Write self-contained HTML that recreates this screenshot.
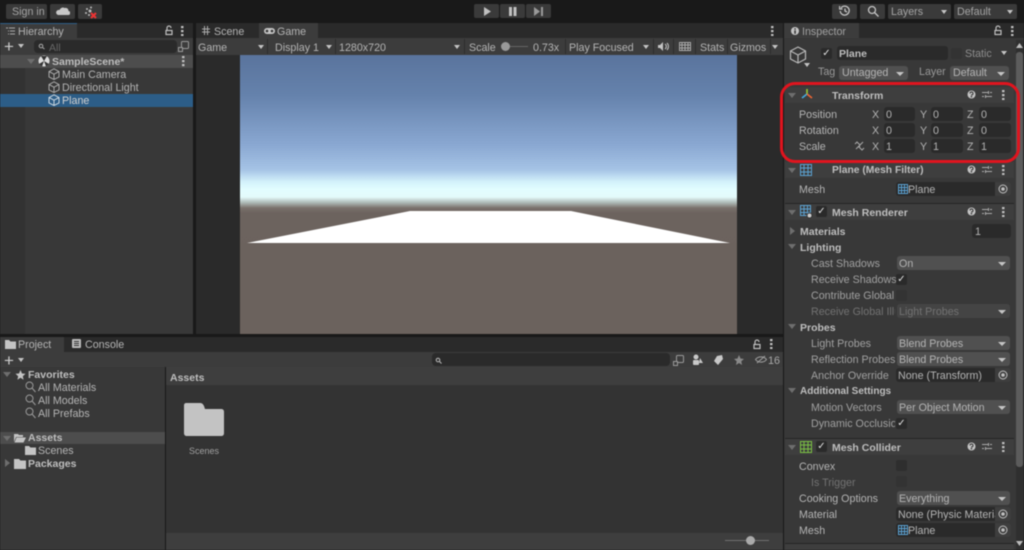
<!DOCTYPE html>
<html><head><meta charset="utf-8"><style>
html,body{margin:0;padding:0;background:#191919;width:1024px;height:550px;overflow:hidden}
#r{position:relative;width:1024px;height:550px;overflow:hidden;font:10.7px/12px "Liberation Sans",sans-serif;color:#b4b4b4;filter:blur(.45px)}
#r div,#r span,#r svg{position:absolute}
#r span{white-space:nowrap;transform:translateY(1px)}
#r span.b{font-weight:bold;font-size:10.5px;color:#bebebe}
.d{color:#727272}
.btn{background:#3a3a3a;border-radius:2px}
.dd{background:#505050;border-radius:3px;height:14px}
.f{background:#2a2a2a;border-radius:3px;height:14px}
.dd::after{content:"";position:absolute;right:4px;top:6px;border:4px solid transparent;border-top-color:#c4c4c4;border-bottom:0}
.a{width:0;height:0;border:4px solid transparent;border-top:5px solid #6e6e6e;border-bottom:0}
.ar{width:0;height:0;border:4px solid transparent;border-left:5px solid #6e6e6e;border-right:0}
.w{width:0;height:0;border:3.5px solid transparent;border-top:4px solid #c4c4c4;border-bottom:0}
.c{width:11px;height:11px;background:#2a2a2a;border-radius:2px;color:#e0e0e0;font-size:10px;line-height:11px;text-align:center}
.h{left:785px;width:229px;background:#3e3e3e;height:16px}
.sep{width:1px;background:#2c2c2c;top:39px;height:15px}
</style></head><body><div id="r">

<!-- top bar -->
<div class="btn" style="left:6px;top:4px;width:41px;height:15px"></div><span style="left:12px;top:5px;color:#a4a4a4">Sign in</span>
<div class="btn" style="left:50px;top:4px;width:25px;height:15px"></div>
<svg style="left:56px;top:6px" width="14" height="10"><path d="M2 9h10a2 2 0 0 0 .5-4 3 3 0 0 0-4-3 3.500 3.500 0 0 0-5 2 2.500 2.500 0 0 0-1.500 5z" fill="#c8c8c8"/></svg>
<div class="btn" style="left:78px;top:4px;width:24px;height:15px"></div>
<svg style="left:84px;top:6px" width="14" height="13"><g fill="#bbb"><circle cx="3" cy="3" r="1"/><circle cx="7" cy="1.500" r="1"/><circle cx="2" cy="7" r="1"/><circle cx="6" cy="5" r="1.500"/><circle cx="5" cy="9" r="1"/></g><path d="M7 7l5 5M12 7l-5 5" stroke="#e33" stroke-width="2"/></svg>
<div class="btn" style="left:474px;top:4px;width:25px;height:14px"></div><svg style="left:483px;top:7px" width="8" height="9"><path d="M1 0l7 4.500-7 4.500z" fill="#c0c0c0"/></svg>
<div class="btn" style="left:500px;top:4px;width:25px;height:14px"></div><svg style="left:508px;top:7px" width="9" height="9"><path d="M1 0h3v9H1zM5.500 0h3v9h-3z" fill="#c0c0c0"/></svg>
<div class="btn" style="left:526px;top:4px;width:25px;height:14px"></div><svg style="left:534px;top:7px" width="9" height="9"><path d="M0 0l6 4.500-6 4.500zM7 0h2v9H7z" fill="#999"/></svg>
<div class="btn" style="left:832px;top:4px;width:25px;height:15px"></div>
<svg style="left:839px;top:5px" width="12" height="12" fill="none" stroke="#c4c4c4" stroke-width="1.300"><path d="M2 3a4.500 4.500 0 1 1-.8 3M6 3.500V6l2 1"/><path d="M.5 1v3h3"/></svg>
<div class="btn" style="left:860px;top:4px;width:25px;height:15px"></div>
<svg style="left:867px;top:5px" width="12" height="12" fill="none" stroke="#c4c4c4" stroke-width="1.300"><circle cx="5" cy="5" r="3.500"/><path d="M7.500 7.500l4 4"/></svg>
<div class="btn" style="left:888px;top:4px;width:63px;height:15px"></div><span style="left:891px;top:5px;color:#a4a4a4">Layers</span><div class="w" style="left:941px;top:10px"></div>
<div class="btn" style="left:954px;top:4px;width:63px;height:15px"></div><span style="left:957px;top:5px;color:#a4a4a4">Default</span><div class="w" style="left:1007px;top:10px"></div>

<!-- hierarchy -->
<div style="left:0;top:23px;width:193px;height:311px;background:#2a2a2a"></div>
<div style="left:0;top:23px;width:77px;height:15px;background:#3c3c3c;border-top:1px solid #2c5d87;box-sizing:border-box"></div>
<svg style="left:6px;top:27px" width="9" height="8" stroke="#aaa"><path d="M0 1h2M3 1h6M2 4h1M4 4h5M2 7h1M4 7h5"/></svg>
<span style="left:18px;top:25px">Hierarchy</span>
<svg style="left:165px;top:25px" width="8" height="11" fill="none" stroke="#c0c0c0" stroke-width="1.200"><path d="M2 5V3a2 2 0 0 1 4 0"/><rect x="1" y="5.500" width="6" height="4"/></svg>
<svg style="left:181px;top:26px" width="3" height="10" fill="#c0c0c0"><rect width="2.500" height="2.200" y="0"/><rect width="2.500" height="2.200" y="4"/><rect width="2.500" height="2.200" y="8"/></svg>
<div style="left:0;top:38px;width:193px;height:17px;background:#3c3c3c"></div>
<span style="left:4px;top:40px;font-size:17px;line-height:12px;color:#ccc">+</span><div class="w" style="left:18px;top:44px"></div>
<div style="left:34px;top:40px;width:143px;height:13px;background:#2a2a2a;border-radius:4px"></div>
<svg style="left:38px;top:43px" width="8" height="7" fill="none" stroke="#aaa"><circle cx="3" cy="3" r="1.800"/><path d="M4.500 4.500l2 1.500"/></svg>
<span style="left:49px;top:41px;color:#666;font-size:10.500px">All</span>
<svg style="left:178px;top:41px" width="11" height="11" fill="none" stroke="#999"><rect x="3.500" y=".5" width="7" height="7" rx="1"/><rect x=".5" y="6.500" width="4" height="4" fill="#3c3c3c"/></svg>
<div style="left:0;top:55px;width:193px;height:279px;background:#383838"></div>
<div style="left:0;top:55px;width:25px;height:279px;background:#323232"></div>
<div style="left:0;top:55px;width:193px;height:13px;background:#4d4d4d"></div>
<div style="left:0;top:94px;width:193px;height:13px;background:#2c5d87"></div>
<div class="a" style="left:27px;top:59px"></div>
<svg style="left:38px;top:55px" width="12" height="12"><circle cx="6" cy="6" r="5.500" fill="#ddd"/><path d="M6 6L3 1h6zM6 6L1 9l3 2.500zM6 6l5 3-3 2.500z" fill="#333"/></svg>
<span class="b" style="left:52px;top:55px">SampleScene*</span>
<svg style="left:182px;top:56px" width="3" height="11" fill="#c0c0c0"><rect width="2.500" height="2.200" y="0"/><rect width="2.500" height="2.200" y="4"/><rect width="2.500" height="2.200" y="8"/></svg>
<svg style="left:48px;top:68px" width="12" height="12" fill="none" stroke="#a8a8a8"><path d="M6 .8l5 2.700v5.500L6 11.500 1 9V3.500zM1 3.500L6 6.200l5-2.700M6 6.200v5.300"/></svg>
<span style="left:62px;top:68px">Main Camera</span>
<svg style="left:48px;top:81px" width="12" height="12" fill="none" stroke="#a8a8a8"><path d="M6 .8l5 2.700v5.500L6 11.500 1 9V3.500zM1 3.500L6 6.200l5-2.700M6 6.200v5.300"/></svg>
<span style="left:62px;top:81px">Directional Light</span>
<svg style="left:48px;top:94px" width="12" height="12" fill="none" stroke="#c8d4de"><path d="M6 .8l5 2.700v5.500L6 11.500 1 9V3.500zM1 3.500L6 6.200l5-2.700M6 6.200v5.300"/></svg>
<span style="left:62px;top:94px;color:#d0d0d0">Plane</span>

<!-- game -->
<div style="left:196px;top:23px;width:587px;height:15px;background:#2a2a2a"></div>
<div style="left:259px;top:23px;width:59px;height:15px;background:#3c3c3c"></div>
<svg style="left:202px;top:26px" width="8" height="9" stroke="#aaa"><path d="M2.500 0v9M5.500 0v9M0 3h8M0 6h8"/></svg>
<span style="left:214px;top:25px">Scene</span>
<svg style="left:264px;top:28px" width="11" height="6"><rect width="11" height="6" rx="3" fill="#c4c4c4"/><circle cx="3" cy="3" r="1.300" fill="#333"/><circle cx="8" cy="3" r="1.300" fill="#333"/></svg>
<span style="left:277px;top:25px">Game</span>
<svg style="left:771px;top:26px" width="3" height="10" fill="#c0c0c0"><rect width="2.500" height="2.200" y="0"/><rect width="2.500" height="2.200" y="4"/><rect width="2.500" height="2.200" y="8"/></svg>
<div style="left:196px;top:38px;width:587px;height:17px;background:#3c3c3c"></div>
<span style="left:198px;top:41px">Game</span><div class="w" style="left:258px;top:45px"></div><div class="sep" style="left:267px"></div>
<span style="left:275px;top:41px">Display 1</span><div class="w" style="left:326px;top:45px"></div><div class="sep" style="left:335px"></div>
<span style="left:339px;top:41px">1280x720</span><div class="w" style="left:454px;top:45px"></div><div class="sep" style="left:464px"></div>
<span style="left:469px;top:41px">Scale</span><div style="left:502px;top:46px;width:26px;height:1px;background:#666"></div><div style="left:501px;top:42px;width:9px;height:9px;border-radius:50%;background:#999"></div>
<span style="left:533px;top:41px">0.73x</span><div class="sep" style="left:565px"></div>
<span style="left:569px;top:41px">Play Focused</span><div class="w" style="left:643px;top:45px"></div><div class="sep" style="left:653px"></div>
<svg style="left:658px;top:42px" width="11" height="9"><path d="M0 3h2l3-3v9L2 6H0z" fill="#c4c4c4"/><path d="M7 2a3 3 0 0 1 0 5M9 1a5 5 0 0 1 0 7" fill="none" stroke="#c4c4c4"/></svg>
<div class="sep" style="left:673px"></div>
<svg style="left:679px;top:42px" width="12" height="9" fill="none" stroke="#aaa"><rect x=".5" y=".5" width="11" height="8"/><path d="M0 3h12M0 6h12M3 0v9M6 0v9M9 0v9"/></svg>
<div class="sep" style="left:695px"></div>
<span style="left:700px;top:41px">Stats</span><div class="sep" style="left:727px"></div>
<span style="left:730px;top:41px">Gizmos</span><div class="sep" style="left:770px"></div><div class="w" style="left:772px;top:45px"></div>
<div style="left:196px;top:55px;width:587px;height:279px;background:#2a2a2a"></div>
<div style="left:240px;top:55px;width:497px;height:279px;background:linear-gradient(180deg,#5a749d 0,#6582ac 40px,#8aa8d2 90px,#a6c4e6 115px,#d4f2fb 127px,#e2fdff 134px,#e4fbfb 142px,#aab4b1 148px,#7a716c 153px,#6c635e 158px,#6b625d 279px)"></div>
<svg style="left:240px;top:205px" width="497" height="42"><path d="M7 38L170 6H331L490 38z" fill="#fff"/></svg>

<!-- project -->
<div style="left:0;top:337px;width:783px;height:15px;background:#2a2a2a"></div>
<div style="left:0;top:337px;width:64px;height:15px;background:#3c3c3c"></div>
<svg style="left:5px;top:340px" width="11" height="9"><path d="M0 0h4l1.500 1.500H11V9H0z" fill="#c4c4c4"/></svg>
<span style="left:18px;top:338px">Project</span>
<svg style="left:72px;top:339px" width="9" height="10"><rect width="9" height="9" rx="1" fill="#bbb"/><path d="M2 2.500h5M2 4.500h5M2 6.500h5" stroke="#333"/></svg>
<span style="left:85px;top:338px">Console</span>
<svg style="left:753px;top:339px" width="8" height="11" fill="none" stroke="#c0c0c0" stroke-width="1.200"><path d="M2 5V3a2 2 0 0 1 4 0"/><rect x="1" y="5.500" width="6" height="4"/></svg>
<svg style="left:770px;top:339px" width="3" height="10" fill="#c0c0c0"><rect width="2.500" height="2.200" y="0"/><rect width="2.500" height="2.200" y="4"/><rect width="2.500" height="2.200" y="8"/></svg>
<div style="left:0;top:352px;width:783px;height:15px;background:#3c3c3c"></div>
<span style="left:4px;top:354px;font-size:17px;line-height:12px;color:#ccc">+</span><div class="w" style="left:18px;top:358px"></div>
<div style="left:432px;top:353px;width:238px;height:13px;background:#2a2a2a;border-radius:4px"></div>
<svg style="left:435px;top:357px" width="7" height="7" fill="none" stroke="#bbb"><circle cx="3" cy="3" r="1.800"/><path d="M4.500 4.500l2 2"/></svg>
<svg style="left:673px;top:355px" width="11" height="11" fill="none" stroke="#999"><rect x="3.500" y=".5" width="7" height="7" rx="1"/><rect x=".5" y="6.500" width="4" height="4" fill="#3c3c3c"/></svg>
<svg style="left:692px;top:354px" width="12" height="12" fill="#c8c8c8"><circle cx="4" cy="3" r="2.500"/><rect x="1" y="6" width="6" height="5" rx="1"/><path d="M8 4l3 5H7z"/></svg>
<svg style="left:712px;top:355px" width="11" height="10"><path d="M5 1l5-1 1 4-5 6-4-4z" fill="#c8c8c8"/></svg>
<svg style="left:734px;top:355px" width="10" height="10"><path d="M5 0l1.500 3.500L10 4 7.300 6.300 8 10 5 8 2 10l.7-3.700L0 4l3.500-.5z" fill="#8a8a8a"/></svg>
<svg style="left:755px;top:355px" width="12" height="9" fill="none" stroke="#a0a0a0"><path d="M.5 4.500C3 1 9 1 11.500 4.500 9 8 3 8 .5 4.500zM2 8l8-7"/></svg>
<span style="left:768px;top:354px;color:#aaa">16</span>
<div style="left:0;top:367px;width:165px;height:183px;background:#383838"></div>
<div style="left:166px;top:367px;width:617px;height:183px;background:#333"></div>
<div style="left:166px;top:367px;width:617px;height:18px;background:#3e3e3e"></div>
<span class="b" style="left:170px;top:371px">Assets</span>
<div class="a" style="left:3px;top:372px"></div>
<svg style="left:15px;top:370px" width="11" height="10"><path d="M5.500 0l1.500 3.500 3.500.3-2.700 2.400.8 3.600-3.100-2-3.100 2 .8-3.600L.5 3.800 4 3.500z" fill="#c4c4c4"/></svg>
<span class="b" style="left:28px;top:368px">Favorites</span>
<svg style="left:25px;top:381px" width="11" height="12" fill="none" stroke="#999"><circle cx="4.500" cy="4.500" r="3.500"/><path d="M7 7l3.500 4"/></svg>
<span style="left:38px;top:381px">All Materials</span>
<svg style="left:25px;top:394px" width="11" height="12" fill="none" stroke="#999"><circle cx="4.500" cy="4.500" r="3.500"/><path d="M7 7l3.500 4"/></svg>
<span style="left:38px;top:394px">All Models</span>
<svg style="left:25px;top:407px" width="11" height="12" fill="none" stroke="#999"><circle cx="4.500" cy="4.500" r="3.500"/><path d="M7 7l3.500 4"/></svg>
<span style="left:38px;top:407px">All Prefabs</span>
<div style="left:0;top:432px;width:165px;height:12px;background:#4d4d4d"></div>
<div class="a" style="left:3px;top:436px"></div>
<svg style="left:14px;top:433px" width="12" height="10"><path d="M0 1h4l1 1h4v2H2L0 9z" fill="#c4c4c4"/><path d="M2.500 4.500H12L9.500 9.500H.5z" fill="#c4c4c4"/></svg>
<span class="b" style="left:28px;top:431px">Assets</span>
<svg style="left:25px;top:446px" width="11" height="9"><path d="M0 0h4l1.500 1.500H11V9H0z" fill="#c4c4c4"/></svg>
<span style="left:38px;top:444px">Scenes</span>
<div class="ar" style="left:5px;top:459px"></div>
<svg style="left:14px;top:459px" width="12" height="10"><path d="M0 0h5l1.500 1.500H12V10H0z" fill="#c4c4c4"/></svg>
<span class="b" style="left:28px;top:457px">Packages</span>
<svg style="left:184px;top:403px" width="40" height="33"><path d="M2 0h14c2 0 3 1 4 3l1 3h16c2 0 3 1 3 3v21c0 2-1 3-3 3H3c-2 0-3-1-3-3V2c0-1 1-2 2-2z" fill="#c3c3c3"/></svg>
<span style="left:189px;top:444px;font-size:9px;color:#a0a0a0">Scenes</span>
<div style="left:166px;top:533px;width:617px;height:17px;background:#3e3e3e"></div>
<div style="left:725px;top:540px;width:44px;height:1px;background:#707070"></div>
<div style="left:746px;top:536px;width:9px;height:9px;border-radius:50%;background:#aaa"></div>

<!-- inspector -->
<div style="left:784px;top:23px;width:240px;height:15px;background:#2a2a2a"></div>
<div style="left:784px;top:23px;width:75px;height:15px;background:#3c3c3c"></div>
<div style="left:784px;top:38px;width:240px;height:512px;background:#383838"></div>
<svg style="left:791px;top:27px" width="8" height="8"><circle cx="4" cy="4" r="4" fill="#c4c4c4"/><rect x="3.300" y="3.300" width="1.500" height="3.500" fill="#333"/><rect x="3.300" y="1.300" width="1.500" height="1.300" fill="#333"/></svg>
<span style="left:802px;top:25px;color:#a0a0a0">Inspector</span>
<svg style="left:994px;top:25px" width="8" height="11" fill="none" stroke="#c0c0c0" stroke-width="1.200"><path d="M2 5V3a2 2 0 0 1 4 0"/><rect x="1" y="5.500" width="6" height="4"/></svg>
<svg style="left:1011px;top:26px" width="3" height="10" fill="#c0c0c0"><rect width="2.500" height="2.200" y="0"/><rect width="2.500" height="2.200" y="4"/><rect width="2.500" height="2.200" y="8"/></svg>
<div style="left:1016px;top:40px;width:8px;height:510px;background:#2f2f2f"></div>
<div style="left:1016px;top:52px;width:7px;height:415px;background:#5c5c5c;border-radius:3px"></div>
<svg style="left:1016px;top:43px" width="7" height="5"><path d="M3.500 0L7 5H0z" fill="#bbb"/></svg>
<svg style="left:1016px;top:541px" width="7" height="5"><path d="M3.500 5L7 0H0z" fill="#bbb"/></svg>
<svg style="left:789px;top:46px" width="18" height="18" fill="none" stroke="#b8b8b8" stroke-width="1.200"><path d="M9 1l7.500 4v8L9 17 1.500 13V5zM1.500 5L9 9l7.500-4M9 9v8"/></svg>
<div class="w" style="left:804px;top:63px"></div>
<div class="c" style="left:821px;top:48px">✓</div>
<div class="f" style="left:837px;top:46px;width:111px"></div><span class="b" style="left:839px;top:47px">Plane</span>
<div class="c" style="left:951px;top:48px;background:#333"></div><span style="left:965px;top:47px;color:#8e8e8e">Static</span><div class="w" style="left:1001px;top:51px"></div>
<span style="left:818px;top:65px;color:#999">Tag</span><div class="dd" style="left:839px;top:66px;width:69px"></div><span style="left:842px;top:66px">Untagged</span>
<span style="left:919px;top:65px;color:#999">Layer</span><div class="dd" style="left:950px;top:66px;width:59px"></div><span style="left:953px;top:66px">Default</span>

<!-- transform -->
<div class="h" style="top:87px"></div><div class="a" style="left:788px;top:93px"></div>
<svg style="left:801px;top:88px" width="12" height="12" fill="none" stroke-width="1.600"><path d="M6 6V1" stroke="#9c3"/><path d="M6 6L1 10" stroke="#4ad"/><path d="M6 6l5 4" stroke="#e63"/></svg>
<span class="b" style="left:832px;top:89px">Transform</span>
<span style="left:799px;top:108px">Position</span><span style="left:799px;top:124px">Rotation</span><span style="left:799px;top:140px">Scale</span>
<svg style="left:854px;top:141px" width="11" height="10" fill="none" stroke="#aaa"><path d="M1 3l2-2 3 3-1 1M10 7L8 9 5 6l1-1M2 8l7-7"/></svg>
<span style="left:872px;top:108px">X</span><div class="f" style="left:884px;top:107px;width:31px"></div><span style="left:886px;top:108px">0</span>
<span style="left:920px;top:108px">Y</span><div class="f" style="left:931px;top:107px;width:32px"></div><span style="left:933px;top:108px">0</span>
<span style="left:967px;top:108px">Z</span><div class="f" style="left:979px;top:107px;width:32px"></div><span style="left:981px;top:108px">0</span>
<span style="left:872px;top:124px">X</span><div class="f" style="left:884px;top:123px;width:31px"></div><span style="left:886px;top:124px">0</span>
<span style="left:920px;top:124px">Y</span><div class="f" style="left:931px;top:123px;width:32px"></div><span style="left:933px;top:124px">0</span>
<span style="left:967px;top:124px">Z</span><div class="f" style="left:979px;top:123px;width:32px"></div><span style="left:981px;top:124px">0</span>
<span style="left:872px;top:140px">X</span><div class="f" style="left:884px;top:139px;width:31px"></div><span style="left:886px;top:140px">1</span>
<span style="left:920px;top:140px">Y</span><div class="f" style="left:931px;top:139px;width:32px"></div><span style="left:933px;top:140px">1</span>
<span style="left:967px;top:140px">Z</span><div class="f" style="left:979px;top:139px;width:32px"></div><span style="left:981px;top:140px">1</span>

<!-- mesh filter -->
<div class="h" style="top:162px"></div><div class="a" style="left:788px;top:168px"></div>
<svg style="left:800px;top:164px" width="12" height="12" fill="none" stroke="#5aa0d0"><rect x=".5" y=".5" width="11" height="11"/><path d="M4 0v12M8 0v12M0 4h12M0 8h12"/></svg>
<span class="b" style="left:832px;top:164px;font-size:10.3px">Plane (Mesh Filter)</span>
<span style="left:799px;top:183px">Mesh</span>
<div class="f" style="left:896px;top:182px;width:115px"></div><div style="left:995px;top:182px;width:16px;height:14px;background:#3e3e3e;border-radius:0 3px 3px 0"></div>
<svg style="left:898px;top:184px" width="10" height="10" fill="none" stroke="#5aa0d0"><rect x=".5" y=".5" width="9" height="9"/><path d="M3.500 0v10M6.500 0v10M0 3.500h10M0 6.500h10"/></svg>
<span style="left:908px;top:183px">Plane</span>
<svg style="left:998px;top:184px" width="10" height="10" fill="none" stroke="#c0c0c0"><circle cx="5" cy="5" r="4"/><circle cx="5" cy="5" r="1.300" fill="#c0c0c0"/></svg>
<div style="left:785px;top:203px;width:229px;height:1px;background:#252525"></div>

<!-- mesh renderer -->
<div class="h" style="top:204px"></div><div class="a" style="left:788px;top:210px"></div>
<svg style="left:800px;top:205px" width="13" height="14" fill="none" stroke="#5aa0d0"><rect x=".5" y=".5" width="10" height="10"/><path d="M4 0v11M7.500 0v11M0 4h11M0 7.500h11"/><circle cx="9.500" cy="10.500" r="2.500" fill="#ccc" stroke="#333"/></svg>
<div class="c" style="left:816px;top:206px">✓</div>
<span class="b" style="left:832px;top:206px">Mesh Renderer</span>
<div class="ar" style="left:790px;top:227px"></div><span class="b" style="left:800px;top:225px">Materials</span>
<div class="f" style="left:972px;top:224px;width:39px"></div><span style="left:975px;top:225px">1</span>
<div class="a" style="left:788px;top:244px"></div><span class="b" style="left:800px;top:241px">Lighting</span>
<span style="left:811px;top:257px;color:#a0a0a0">Cast Shadows</span><div class="dd" style="left:897px;top:256px;width:113px"></div><span style="left:899px;top:257px">On</span>
<span style="left:811px;top:273px;color:#a0a0a0">Receive Shadows</span><div class="c" style="left:896px;top:274px">✓</div>
<span style="left:811px;top:289px;color:#a0a0a0">Contribute Global</span><div class="c" style="left:896px;top:290px;background:#333"></div>
<span class="d" style="left:811px;top:305px;width:84px;overflow:hidden">Receive Global Illumination</span><div class="dd" style="left:897px;top:304px;width:113px;background:#444"></div><span class="d" style="left:899px;top:305px">Light Probes</span>
<div class="a" style="left:788px;top:324px"></div><span class="b" style="left:800px;top:321px">Probes</span>
<span style="left:811px;top:337px;color:#a0a0a0">Light Probes</span><div class="dd" style="left:897px;top:336px;width:113px"></div><span style="left:899px;top:337px">Blend Probes</span>
<span style="left:811px;top:353px;color:#a0a0a0;width:85px;overflow:hidden">Reflection Probes</span><div class="dd" style="left:897px;top:352px;width:113px"></div><span style="left:899px;top:353px">Blend Probes</span>
<span style="left:811px;top:369px;color:#a0a0a0">Anchor Override</span><div class="f" style="left:896px;top:368px;width:115px"></div><div style="left:995px;top:368px;width:16px;height:14px;background:#3e3e3e;border-radius:0 3px 3px 0"></div><span style="left:898px;top:369px">None (Transform)</span>
<svg style="left:998px;top:370px" width="10" height="10" fill="none" stroke="#c0c0c0"><circle cx="5" cy="5" r="4"/><circle cx="5" cy="5" r="1.300" fill="#c0c0c0"/></svg>
<div class="a" style="left:788px;top:388px"></div><span class="b" style="left:800px;top:385px;font-size:10px">Additional Settings</span>
<span style="left:811px;top:401px;color:#a0a0a0">Motion Vectors</span><div class="dd" style="left:897px;top:400px;width:113px"></div><span style="left:899px;top:401px">Per Object Motion</span>
<span style="left:811px;top:417px;color:#a0a0a0;width:84px;overflow:hidden">Dynamic Occlusion</span><div class="c" style="left:896px;top:418px">✓</div>
<div style="left:785px;top:438px;width:229px;height:1px;background:#252525"></div>

<!-- mesh collider -->
<div class="h" style="top:439px"></div><div class="a" style="left:788px;top:445px"></div>
<svg style="left:800px;top:441px" width="12" height="12" fill="none" stroke="#7ac043"><rect x=".5" y=".5" width="11" height="11"/><path d="M4 0v12M8 0v12M0 4h12M0 8h12"/></svg>
<div class="c" style="left:816px;top:441px">✓</div>
<span class="b" style="left:832px;top:441px">Mesh Collider</span>
<span style="left:799px;top:460px">Convex</span><div class="c" style="left:896px;top:460px;background:#2e2e2e"></div>
<span class="d" style="left:811px;top:476px">Is Trigger</span><div class="c" style="left:896px;top:476px;background:#333"></div>
<span style="left:799px;top:492px">Cooking Options</span><div class="dd" style="left:897px;top:491px;width:113px"></div><span style="left:899px;top:492px">Everything</span>
<span style="left:799px;top:508px">Material</span><div class="f" style="left:896px;top:507px;width:115px"></div><span style="left:898px;top:508px;width:97px;overflow:hidden">None (Physic Material)</span><div style="left:995px;top:507px;width:16px;height:14px;background:#3e3e3e;border-radius:0 3px 3px 0"></div>
<svg style="left:998px;top:509px" width="10" height="10" fill="none" stroke="#c0c0c0"><circle cx="5" cy="5" r="4"/><circle cx="5" cy="5" r="1.300" fill="#c0c0c0"/></svg>
<span style="left:799px;top:524px">Mesh</span><div class="f" style="left:896px;top:523px;width:115px"></div><div style="left:995px;top:523px;width:16px;height:14px;background:#3e3e3e;border-radius:0 3px 3px 0"></div>
<svg style="left:898px;top:525px" width="10" height="10" fill="none" stroke="#5aa0d0"><rect x=".5" y=".5" width="9" height="9"/><path d="M3.500 0v10M6.500 0v10M0 3.500h10M0 6.500h10"/></svg>
<span style="left:908px;top:524px">Plane</span>
<svg style="left:998px;top:525px" width="10" height="10" fill="none" stroke="#c0c0c0"><circle cx="5" cy="5" r="4"/><circle cx="5" cy="5" r="1.300" fill="#c0c0c0"/></svg>
<div style="left:785px;top:543px;width:229px;height:1px;background:#252525"></div>
<div style="left:785px;top:544px;width:229px;height:6px;background:#3e3e3e"></div>

<!-- red highlight -->
<div style="left:780px;top:82px;width:240px;height:81px;box-sizing:border-box;border:3px solid #e0141e;border-radius:15px"></div>

<!-- header icons -->
<svg style="left:967px;top:90px" width="9" height="9"><circle cx="4.500" cy="4.500" r="4" fill="#c4c4c4"/><rect x="3.700" y="6" width="1.500" height="1.300" fill="#333"/><path d="M3 3.500a1.500 1.500 0 1 1 1.500 1.500V5.500" fill="none" stroke="#333"/></svg>
<svg style="left:982px;top:90px" width="10" height="9" stroke="#aaa" fill="none"><path d="M0 2.500h6M8 2.500h2M0 6.500h2M4 6.500h6M6.500 1v3M3.500 5v3"/></svg>
<svg style="left:1002px;top:90px" width="3" height="10" fill="#c0c0c0"><rect width="2.500" height="2.200" y="0"/><rect width="2.500" height="2.200" y="4"/><rect width="2.500" height="2.200" y="8"/></svg>
<svg style="left:967px;top:165px" width="9" height="9"><circle cx="4.500" cy="4.500" r="4" fill="#c4c4c4"/><rect x="3.700" y="6" width="1.500" height="1.300" fill="#333"/><path d="M3 3.500a1.500 1.500 0 1 1 1.500 1.500V5.500" fill="none" stroke="#333"/></svg>
<svg style="left:982px;top:165px" width="10" height="9" stroke="#aaa" fill="none"><path d="M0 2.500h6M8 2.500h2M0 6.500h2M4 6.500h6M6.500 1v3M3.500 5v3"/></svg>
<svg style="left:1002px;top:165px" width="3" height="10" fill="#c0c0c0"><rect width="2.500" height="2.200" y="0"/><rect width="2.500" height="2.200" y="4"/><rect width="2.500" height="2.200" y="8"/></svg>
<svg style="left:967px;top:207px" width="9" height="9"><circle cx="4.500" cy="4.500" r="4" fill="#c4c4c4"/><rect x="3.700" y="6" width="1.500" height="1.300" fill="#333"/><path d="M3 3.500a1.500 1.500 0 1 1 1.500 1.500V5.500" fill="none" stroke="#333"/></svg>
<svg style="left:982px;top:207px" width="10" height="9" stroke="#aaa" fill="none"><path d="M0 2.500h6M8 2.500h2M0 6.500h2M4 6.500h6M6.500 1v3M3.500 5v3"/></svg>
<svg style="left:1002px;top:207px" width="3" height="10" fill="#c0c0c0"><rect width="2.500" height="2.200" y="0"/><rect width="2.500" height="2.200" y="4"/><rect width="2.500" height="2.200" y="8"/></svg>
<svg style="left:967px;top:442px" width="9" height="9"><circle cx="4.500" cy="4.500" r="4" fill="#c4c4c4"/><rect x="3.700" y="6" width="1.500" height="1.300" fill="#333"/><path d="M3 3.500a1.500 1.500 0 1 1 1.500 1.500V5.500" fill="none" stroke="#333"/></svg>
<svg style="left:982px;top:442px" width="10" height="9" stroke="#aaa" fill="none"><path d="M0 2.500h6M8 2.500h2M0 6.500h2M4 6.500h6M6.500 1v3M3.500 5v3"/></svg>
<svg style="left:1002px;top:442px" width="3" height="10" fill="#c0c0c0"><rect width="2.500" height="2.200" y="0"/><rect width="2.500" height="2.200" y="4"/><rect width="2.500" height="2.200" y="8"/></svg>
</div></body></html>
